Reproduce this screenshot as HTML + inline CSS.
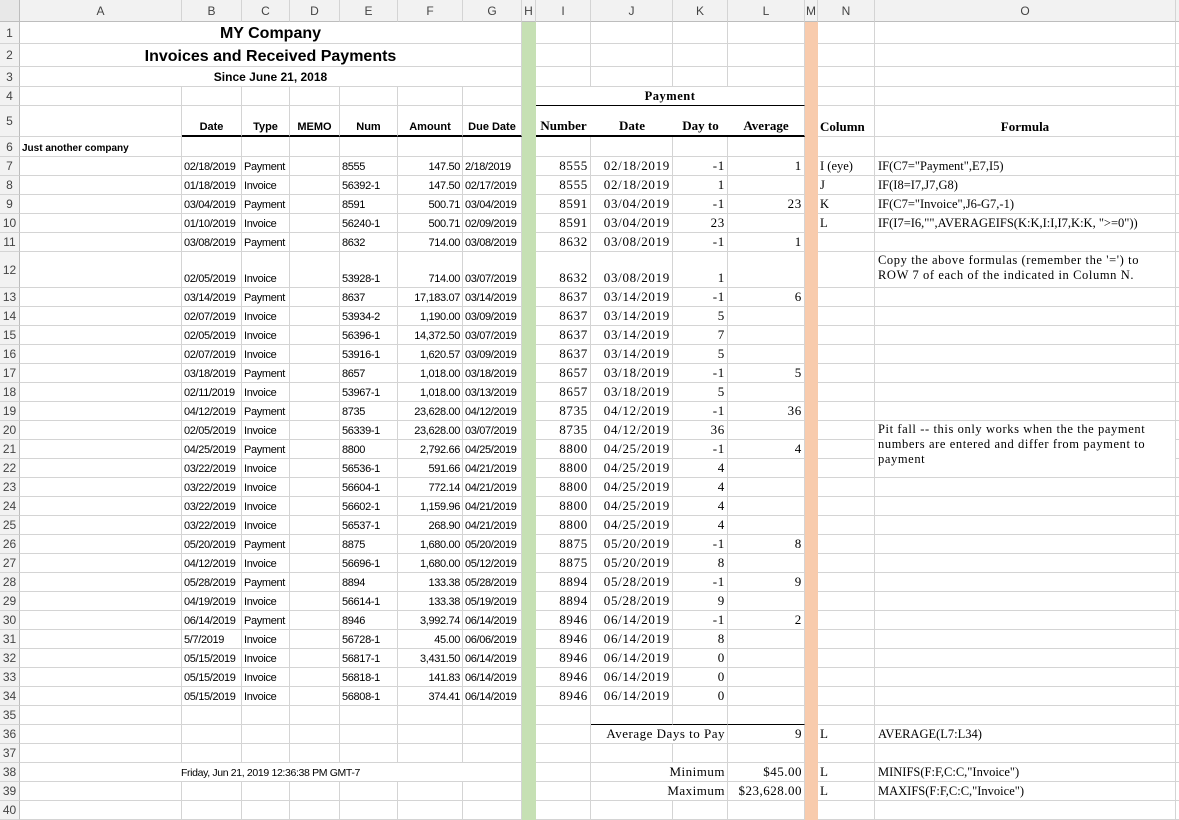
<!DOCTYPE html>
<html><head><meta charset="utf-8"><style>
body{margin:0;background:#fff;overflow:hidden;width:1179px;height:811px}
table{border-collapse:separate;border-spacing:0;table-layout:fixed;width:1179px}
td,th{padding:0 2px;border-right:1px solid #d4d4d4;border-bottom:1px solid #d4d4d4;white-space:nowrap;overflow:hidden;font:11px "Liberation Sans",Arial,sans-serif;letter-spacing:-0.35px;color:#000;vertical-align:bottom;padding-bottom:2px;box-sizing:border-box}
th{font-weight:normal;color:#444;background:#f2f2f2;text-align:center;font-size:12px;letter-spacing:0;vertical-align:middle;padding:0}
tr.hd th{border-bottom:1px solid #bdbdbd}
tr th:first-child{border-right:1px solid #bdbdbd}
.h{background:#c6e0b4;border-right-color:#c6e0b4;border-bottom-color:#c6e0b4}
.m{background:#f8cbad;border-right-color:#f8cbad;border-bottom-color:#f8cbad}
.s{font:13px "Liberation Serif",Cambria,serif;letter-spacing:0.5px;padding-bottom:1px}
.r{text-align:right}.c{text-align:center}.b{font-weight:bold}
.t{vertical-align:middle;padding:0;letter-spacing:0}
tr.dr td:nth-child(7){text-align:right}
tr.dr td:nth-child(10),tr.dr td:nth-child(11),tr.dr td:nth-child(12),tr.dr td:nth-child(13){font:13px "Liberation Serif",serif;letter-spacing:0.7px;text-align:right;padding-bottom:1px}
tr.dr td:nth-child(15),tr.dr td:nth-child(16){font:12.5px "Liberation Serif",serif;letter-spacing:0;padding-bottom:1px}
tr.dr td:nth-child(16){padding-left:3px}
tr{height:19px}
.bk{border-bottom:2px solid #000}
.bk1{border-bottom:1px solid #000}
.nr{border-right:none}
td.wrap{white-space:normal !important;vertical-align:top !important;line-height:18px !important;padding:1px 3px 0 !important;font:12.5px "Liberation Serif",serif !important;letter-spacing:0.6px !important}
.f{border-right:none}
</style></head><body>
<table>
<colgroup><col style="width:20px"><col style="width:162px"><col style="width:60px"><col style="width:48px"><col style="width:50px"><col style="width:58px"><col style="width:65px"><col style="width:59px"><col style="width:14px"><col style="width:55px"><col style="width:82px"><col style="width:55px"><col style="width:77px"><col style="width:13px"><col style="width:57px"><col style="width:301px"><col style="width:3px"></colgroup>
<tr class="hd" style="height:22px"><th style="background:#e8e8e8"></th><th>A</th><th>B</th><th>C</th><th>D</th><th>E</th><th>F</th><th>G</th><th>H</th><th>I</th><th>J</th><th>K</th><th>L</th><th>M</th><th>N</th><th>O</th><th class="f"></th></tr>
<tr style="height:22px"><th>1</th><td colspan="7" class="c b t" style="font-size:16px;padding-top:3px">MY Company</td><td class="h"></td><td></td><td></td><td></td><td></td><td class="m"></td><td></td><td></td><td class="f"></td></tr>
<tr style="height:23px"><th>2</th><td colspan="7" class="c b t" style="font-size:16px;padding-top:4px">Invoices and Received Payments</td><td class="h"></td><td></td><td></td><td></td><td></td><td class="m"></td><td></td><td></td><td class="f"></td></tr>
<tr style="height:20px"><th>3</th><td colspan="7" class="c b t" style="font-size:12px;padding-top:1px">Since June 21, 2018</td><td class="h"></td><td></td><td></td><td></td><td></td><td class="m"></td><td></td><td></td><td class="f"></td></tr>
<tr style="height:19px"><th>4</th><td></td><td></td><td></td><td></td><td></td><td></td><td></td><td class="h"></td><td colspan="4" class="s c b bk1" style="font-size:12.5px">Payment</td><td class="m"></td><td></td><td></td><td class="f"></td></tr>
<tr style="height:31px"><th>5</th><td></td><td class="c b bk" style="font-size:11px;letter-spacing:0">Date</td><td class="c b bk" style="font-size:11px;letter-spacing:0">Type</td><td class="c b bk" style="font-size:11px;letter-spacing:0">MEMO</td><td class="c b bk" style="font-size:11px;letter-spacing:0">Num</td><td class="c b bk" style="font-size:11px;letter-spacing:0">Amount</td><td class="c b bk" style="font-size:11px;letter-spacing:0">Due Date</td><td class="h"></td><td class="s c b bk nr" style="letter-spacing:0">Number</td><td class="s c b bk nr" style="letter-spacing:0">Date</td><td class="s c b bk nr" style="letter-spacing:0">Day to</td><td class="s c b bk" style="letter-spacing:0">Average</td><td class="m"></td><td class="s b" style="letter-spacing:0">Column</td><td class="s b c" style="letter-spacing:0">Formula</td><td class="f"></td></tr>
<tr style="height:20px"><th>6</th><td class="b" style="overflow:visible;letter-spacing:0;font-size:10px">Just another company</td><td></td><td></td><td></td><td></td><td></td><td></td><td class="h"></td><td></td><td></td><td></td><td></td><td class="m"></td><td></td><td></td><td class="f"></td></tr>
<tr class="dr"><th>7</th><td></td><td>02/18/2019</td><td>Payment</td><td></td><td>8555</td><td>147.50</td><td>2/18/2019</td><td class="h"></td><td>8555</td><td>02/18/2019</td><td>-1</td><td>1</td><td class="m"></td><td>I (eye)</td><td>IF(C7="Payment",E7,I5)</td><td class="f"></td></tr>
<tr class="dr"><th>8</th><td></td><td>01/18/2019</td><td>Invoice</td><td></td><td>56392-1</td><td>147.50</td><td>02/17/2019</td><td class="h"></td><td>8555</td><td>02/18/2019</td><td>1</td><td></td><td class="m"></td><td>J</td><td>IF(I8=I7,J7,G8)</td><td class="f"></td></tr>
<tr class="dr"><th>9</th><td></td><td>03/04/2019</td><td>Payment</td><td></td><td>8591</td><td>500.71</td><td>03/04/2019</td><td class="h"></td><td>8591</td><td>03/04/2019</td><td>-1</td><td>23</td><td class="m"></td><td>K</td><td>IF(C7="Invoice",J6-G7,-1)</td><td class="f"></td></tr>
<tr class="dr"><th>10</th><td></td><td>01/10/2019</td><td>Invoice</td><td></td><td>56240-1</td><td>500.71</td><td>02/09/2019</td><td class="h"></td><td>8591</td><td>03/04/2019</td><td>23</td><td></td><td class="m"></td><td>L</td><td>IF(I7=I6,"",AVERAGEIFS(K:K,I:I,I7,K:K, "&gt;=0"))</td><td class="f"></td></tr>
<tr class="dr"><th>11</th><td></td><td>03/08/2019</td><td>Payment</td><td></td><td>8632</td><td>714.00</td><td>03/08/2019</td><td class="h"></td><td>8632</td><td>03/08/2019</td><td>-1</td><td>1</td><td class="m"></td><td></td><td></td><td class="f"></td></tr>
<tr class="dr" style="height:36px"><th>12</th><td></td><td>02/05/2019</td><td>Invoice</td><td></td><td>53928-1</td><td>714.00</td><td>03/07/2019</td><td class="h"></td><td>8632</td><td>03/08/2019</td><td>1</td><td></td><td class="m"></td><td></td><td class="wrap">Copy the above formulas (remember the '=') to ROW 7 of each of the indicated in Column N.</td><td class="f"></td></tr>
<tr class="dr"><th>13</th><td></td><td>03/14/2019</td><td>Payment</td><td></td><td>8637</td><td>17,183.07</td><td>03/14/2019</td><td class="h"></td><td>8637</td><td>03/14/2019</td><td>-1</td><td>6</td><td class="m"></td><td></td><td></td><td class="f"></td></tr>
<tr class="dr"><th>14</th><td></td><td>02/07/2019</td><td>Invoice</td><td></td><td>53934-2</td><td>1,190.00</td><td>03/09/2019</td><td class="h"></td><td>8637</td><td>03/14/2019</td><td>5</td><td></td><td class="m"></td><td></td><td></td><td class="f"></td></tr>
<tr class="dr"><th>15</th><td></td><td>02/05/2019</td><td>Invoice</td><td></td><td>56396-1</td><td>14,372.50</td><td>03/07/2019</td><td class="h"></td><td>8637</td><td>03/14/2019</td><td>7</td><td></td><td class="m"></td><td></td><td></td><td class="f"></td></tr>
<tr class="dr"><th>16</th><td></td><td>02/07/2019</td><td>Invoice</td><td></td><td>53916-1</td><td>1,620.57</td><td>03/09/2019</td><td class="h"></td><td>8637</td><td>03/14/2019</td><td>5</td><td></td><td class="m"></td><td></td><td></td><td class="f"></td></tr>
<tr class="dr"><th>17</th><td></td><td>03/18/2019</td><td>Payment</td><td></td><td>8657</td><td>1,018.00</td><td>03/18/2019</td><td class="h"></td><td>8657</td><td>03/18/2019</td><td>-1</td><td>5</td><td class="m"></td><td></td><td></td><td class="f"></td></tr>
<tr class="dr"><th>18</th><td></td><td>02/11/2019</td><td>Invoice</td><td></td><td>53967-1</td><td>1,018.00</td><td>03/13/2019</td><td class="h"></td><td>8657</td><td>03/18/2019</td><td>5</td><td></td><td class="m"></td><td></td><td></td><td class="f"></td></tr>
<tr class="dr"><th>19</th><td></td><td>04/12/2019</td><td>Payment</td><td></td><td>8735</td><td>23,628.00</td><td>04/12/2019</td><td class="h"></td><td>8735</td><td>04/12/2019</td><td>-1</td><td>36</td><td class="m"></td><td></td><td></td><td class="f"></td></tr>
<tr class="dr"><th>20</th><td></td><td>02/05/2019</td><td>Invoice</td><td></td><td>56339-1</td><td>23,628.00</td><td>03/07/2019</td><td class="h"></td><td>8735</td><td>04/12/2019</td><td>36</td><td></td><td class="m"></td><td></td><td rowspan="3" class="wrap">Pit fall -- this only works when the the payment numbers are entered and differ from payment to payment</td><td class="f"></td></tr>
<tr class="dr"><th>21</th><td></td><td>04/25/2019</td><td>Payment</td><td></td><td>8800</td><td>2,792.66</td><td>04/25/2019</td><td class="h"></td><td>8800</td><td>04/25/2019</td><td>-1</td><td>4</td><td class="m"></td><td></td><td class="f"></td></tr>
<tr class="dr"><th>22</th><td></td><td>03/22/2019</td><td>Invoice</td><td></td><td>56536-1</td><td>591.66</td><td>04/21/2019</td><td class="h"></td><td>8800</td><td>04/25/2019</td><td>4</td><td></td><td class="m"></td><td></td><td class="f"></td></tr>
<tr class="dr"><th>23</th><td></td><td>03/22/2019</td><td>Invoice</td><td></td><td>56604-1</td><td>772.14</td><td>04/21/2019</td><td class="h"></td><td>8800</td><td>04/25/2019</td><td>4</td><td></td><td class="m"></td><td></td><td></td><td class="f"></td></tr>
<tr class="dr"><th>24</th><td></td><td>03/22/2019</td><td>Invoice</td><td></td><td>56602-1</td><td>1,159.96</td><td>04/21/2019</td><td class="h"></td><td>8800</td><td>04/25/2019</td><td>4</td><td></td><td class="m"></td><td></td><td></td><td class="f"></td></tr>
<tr class="dr"><th>25</th><td></td><td>03/22/2019</td><td>Invoice</td><td></td><td>56537-1</td><td>268.90</td><td>04/21/2019</td><td class="h"></td><td>8800</td><td>04/25/2019</td><td>4</td><td></td><td class="m"></td><td></td><td></td><td class="f"></td></tr>
<tr class="dr"><th>26</th><td></td><td>05/20/2019</td><td>Payment</td><td></td><td>8875</td><td>1,680.00</td><td>05/20/2019</td><td class="h"></td><td>8875</td><td>05/20/2019</td><td>-1</td><td>8</td><td class="m"></td><td></td><td></td><td class="f"></td></tr>
<tr class="dr"><th>27</th><td></td><td>04/12/2019</td><td>Invoice</td><td></td><td>56696-1</td><td>1,680.00</td><td>05/12/2019</td><td class="h"></td><td>8875</td><td>05/20/2019</td><td>8</td><td></td><td class="m"></td><td></td><td></td><td class="f"></td></tr>
<tr class="dr"><th>28</th><td></td><td>05/28/2019</td><td>Payment</td><td></td><td>8894</td><td>133.38</td><td>05/28/2019</td><td class="h"></td><td>8894</td><td>05/28/2019</td><td>-1</td><td>9</td><td class="m"></td><td></td><td></td><td class="f"></td></tr>
<tr class="dr"><th>29</th><td></td><td>04/19/2019</td><td>Invoice</td><td></td><td>56614-1</td><td>133.38</td><td>05/19/2019</td><td class="h"></td><td>8894</td><td>05/28/2019</td><td>9</td><td></td><td class="m"></td><td></td><td></td><td class="f"></td></tr>
<tr class="dr"><th>30</th><td></td><td>06/14/2019</td><td>Payment</td><td></td><td>8946</td><td>3,992.74</td><td>06/14/2019</td><td class="h"></td><td>8946</td><td>06/14/2019</td><td>-1</td><td>2</td><td class="m"></td><td></td><td></td><td class="f"></td></tr>
<tr class="dr"><th>31</th><td></td><td>5/7/2019</td><td>Invoice</td><td></td><td>56728-1</td><td>45.00</td><td>06/06/2019</td><td class="h"></td><td>8946</td><td>06/14/2019</td><td>8</td><td></td><td class="m"></td><td></td><td></td><td class="f"></td></tr>
<tr class="dr"><th>32</th><td></td><td>05/15/2019</td><td>Invoice</td><td></td><td>56817-1</td><td>3,431.50</td><td>06/14/2019</td><td class="h"></td><td>8946</td><td>06/14/2019</td><td>0</td><td></td><td class="m"></td><td></td><td></td><td class="f"></td></tr>
<tr class="dr"><th>33</th><td></td><td>05/15/2019</td><td>Invoice</td><td></td><td>56818-1</td><td>141.83</td><td>06/14/2019</td><td class="h"></td><td>8946</td><td>06/14/2019</td><td>0</td><td></td><td class="m"></td><td></td><td></td><td class="f"></td></tr>
<tr class="dr"><th>34</th><td></td><td>05/15/2019</td><td>Invoice</td><td></td><td>56808-1</td><td>374.41</td><td>06/14/2019</td><td class="h"></td><td>8946</td><td>06/14/2019</td><td>0</td><td></td><td class="m"></td><td></td><td></td><td class="f"></td></tr>
<tr><th>35</th><td></td><td></td><td></td><td></td><td></td><td></td><td></td><td class="h"></td><td></td><td class="bk1"></td><td class="bk1"></td><td class="bk1"></td><td class="m"></td><td></td><td></td><td class="f"></td></tr>
<tr><th>36</th><td></td><td></td><td></td><td></td><td></td><td></td><td></td><td class="h"></td><td></td><td colspan="2" class="s r">Average Days to Pay</td><td class="s r">9</td><td class="m"></td><td class="s">L</td><td class="s" style="padding-left:3px;font-size:12.5px;letter-spacing:0">AVERAGE(L7:L34)</td><td class="f"></td></tr>
<tr><th>37</th><td></td><td></td><td></td><td></td><td></td><td></td><td></td><td class="h"></td><td></td><td></td><td></td><td></td><td class="m"></td><td></td><td></td><td class="f"></td></tr>
<tr><th>38</th><td colspan="7" class="c" style="letter-spacing:-0.35px;font-size:10.5px">Friday, Jun 21, 2019 12:36:38 PM GMT-7</td><td class="h"></td><td></td><td colspan="2" class="s r">Minimum</td><td class="s r">$45.00</td><td class="m"></td><td class="s">L</td><td class="s" style="padding-left:3px;font-size:12.5px;letter-spacing:0">MINIFS(F:F,C:C,"Invoice")</td><td class="f"></td></tr>
<tr><th>39</th><td></td><td></td><td></td><td></td><td></td><td></td><td></td><td class="h"></td><td></td><td colspan="2" class="s r">Maximum</td><td class="s r">$23,628.00</td><td class="m"></td><td class="s">L</td><td class="s" style="padding-left:3px;font-size:12.5px;letter-spacing:0">MAXIFS(F:F,C:C,"Invoice")</td><td class="f"></td></tr>
<tr><th>40</th><td></td><td></td><td></td><td></td><td></td><td></td><td></td><td class="h"></td><td></td><td></td><td></td><td></td><td class="m"></td><td></td><td></td><td class="f"></td></tr>
</table>
</body></html>
